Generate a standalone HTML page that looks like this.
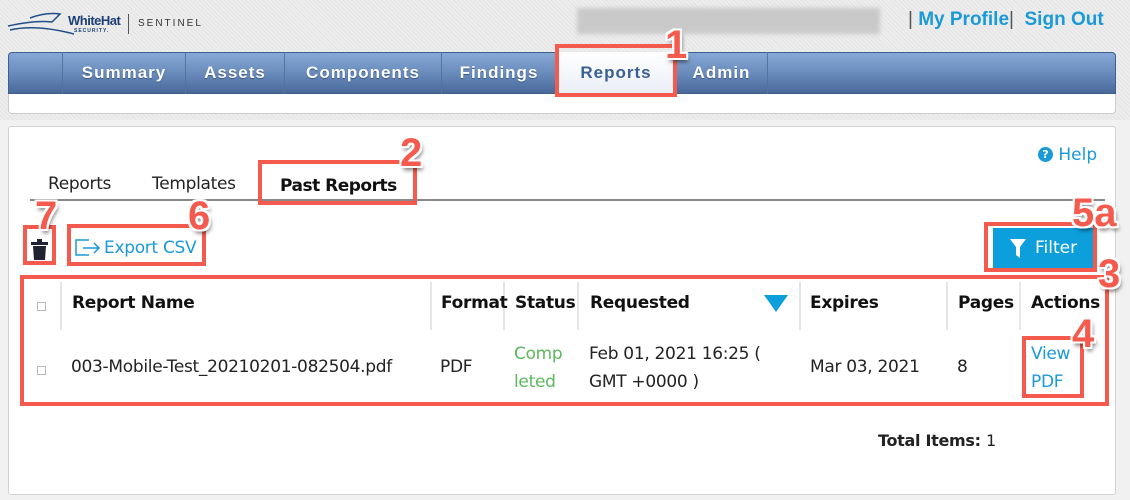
<!DOCTYPE html>
<html><head><meta charset="utf-8"><style>
*{box-sizing:border-box;margin:0;padding:0}
body{width:1130px;height:500px;position:relative;overflow:hidden;background:#f1f1f1;font-family:"Liberation Sans",sans-serif}
.a{position:absolute}
.hdr{left:0;top:0;width:1130px;height:120px;background:repeating-linear-gradient(45deg,#e4e4e4 0 1px,#ededed 1px 3px)}
.nav{left:8px;top:52px;width:1108px;height:42px;background:linear-gradient(#86a8d6,#6a8cbc 50%,#48699a);border:1px solid #3f5f8e;border-radius:4px 4px 0 0}
.tab{position:absolute;top:52px;height:42px;line-height:42px;color:#fff;font-weight:bold;font-size:17px;letter-spacing:1px;text-align:center;border-right:1px solid #55739f;text-shadow:0 1px 1px #3a5680}
.red{position:absolute;border:4px solid #f55a4e}
.num{position:absolute;color:#f55a4e;font-weight:bold;font-size:40px;font-family:"Liberation Sans",sans-serif;line-height:1;text-shadow:2px 0 0 #fff,-2px 0 0 #fff,0 2px 0 #fff,0 -2px 0 #fff,2px 2px 0 #fff,-2px -2px 0 #fff,2px -2px 0 #fff,-2px 2px 0 #fff,2px 4px 4px rgba(0,0,0,.55)}
.th{position:absolute;top:293px;font-weight:bold;font-size:17px;color:#111;font-family:"DejaVu Sans","Liberation Sans",sans-serif;letter-spacing:-.3px}
.td{position:absolute;font-size:17px;color:#222;font-family:"DejaVu Sans","Liberation Sans",sans-serif;letter-spacing:-.3px;line-height:28px}
.sep{position:absolute;top:282px;height:48px;width:2px;background:#e6e6e6}
.cb{position:absolute;width:9px;height:9px;border:1px solid #bbb;background:#fff}
</style></head><body>
<div class="a hdr"></div>
<svg class="a" style="left:6px;top:10px" width="70" height="26"><path d="M2 16 Q30 10 46 12 L54 4 Q40 2 24 8" fill="none" stroke="#1d4f8a" stroke-width="1.5"/><path d="M4 20 Q30 14 68 24" fill="none" stroke="#1d4f8a" stroke-width="1.5"/></svg>
<div class="a" style="left:68px;top:13px;font-weight:bold;font-size:13px;color:#1d3f75;letter-spacing:-.5px">WhiteHat</div>
<div class="a" style="left:74px;top:28px;font-size:5px;font-weight:bold;color:#1d3f75;letter-spacing:1px">SECURITY.</div>
<div class="a" style="left:128px;top:14px;width:1px;height:20px;background:#555"></div>
<div class="a" style="left:138px;top:18px;font-size:10px;letter-spacing:2px;color:#333">SENTINEL</div>
<div class="a" style="left:577px;top:8px;width:303px;height:26px;background:#c9c9c9;filter:blur(2px)"></div>
<div class="a" style="left:908px;top:9px;font-size:19px;font-weight:bold;color:#1a9ad6;white-space:nowrap"><span style="color:#555;font-weight:normal">|</span> My Profile<span style="color:#555;font-weight:normal">|</span>&nbsp; Sign Out</div>
<div class="a nav"></div>
<div class="tab" style="left:62px;width:124px;border-left:1px solid #55739f">Summary</div>
<div class="tab" style="left:186px;width:99px">Assets</div>
<div class="tab" style="left:285px;width:157px">Components</div>
<div class="tab" style="left:442px;width:115px">Findings</div>
<div class="tab" style="left:557px;width:119px;background:linear-gradient(#fff,#e9eef4);color:#3a5f94;text-shadow:none">Reports</div>
<div class="tab" style="left:676px;width:92px">Admin</div>
<div class="a" style="left:8px;top:94px;width:1108px;height:20px;background:#fff;border:1px solid #ccc;border-top:none;border-radius:0 0 4px 4px"></div>
<div class="a" style="left:8px;top:126px;width:1108px;height:369px;background:#fff;border:1px solid #d2d2d2;border-radius:3px"></div>
<div class="a" style="left:1038px;top:145px;font-size:17px;color:#1a9ad6;font-family:'DejaVu Sans',sans-serif"><span style="display:inline-block;width:15px;height:15px;border-radius:50%;background:#1a9ad6;color:#fff;font-size:11px;text-align:center;line-height:15px;font-weight:bold;vertical-align:2px">?</span> Help</div>
<div class="a" style="left:48px;top:174px;font-size:17px;color:#222;font-family:'DejaVu Sans',sans-serif;letter-spacing:-.3px">Reports</div>
<div class="a" style="left:152px;top:174px;font-size:17px;color:#222;font-family:'DejaVu Sans',sans-serif;letter-spacing:-.3px">Templates</div>
<div class="a" style="left:280px;top:176px;font-size:17px;font-weight:bold;color:#111;font-family:'DejaVu Sans',sans-serif;letter-spacing:-.5px">Past Reports</div>
<div class="a" style="left:30px;top:199px;width:1075px;height:2px;background:#888"></div>
<div class="red" style="left:258px;top:160px;width:159px;height:45px"></div>
<svg class="a" style="left:31px;top:239px" width="17" height="22"><rect x="0" y="3" width="17" height="3" fill="#1f2430"/><rect x="6" y="0" width="5" height="4" fill="#1f2430"/><path d="M2 7 H15 L14 21 H3 Z" fill="#1f2430"/></svg>
<div class="red" style="left:23px;top:225px;width:33px;height:40px"></div>
<svg class="a" style="left:75px;top:238px" width="26" height="20"><path d="M14 2 H1 V17 H14" fill="none" stroke="#1a9ad6" stroke-width="1.5"/><path d="M8 10 H24 M19 5 L24 10 L19 15" fill="none" stroke="#1a9ad6" stroke-width="1.5"/></svg>
<div class="a" style="left:104px;top:238px;font-size:17px;color:#1a9ad6;font-family:'DejaVu Sans',sans-serif;letter-spacing:-.3px">Export CSV</div>
<div class="red" style="left:67px;top:224px;width:139px;height:42px"></div>
<div class="a" style="left:993px;top:228px;width:100px;height:40px;background:#0d9fdb;color:#fff;font-size:17px;font-family:'DejaVu Sans',sans-serif;line-height:40px;padding-left:42px">Filter</div>
<svg class="a" style="left:1010px;top:239px" width="16" height="19"><path d="M0 0 H16 L10 8 V19 L6 16 V8 Z" fill="#fff"/></svg>
<div class="red" style="left:984px;top:222px;width:113px;height:50px"></div>
<div class="sep" style="left:60px"></div><div class="sep" style="left:430px"></div><div class="sep" style="left:503px"></div><div class="sep" style="left:577px"></div><div class="sep" style="left:799px"></div><div class="sep" style="left:946px"></div><div class="sep" style="left:1019px"></div>
<div class="cb" style="left:37px;top:302px"></div><div class="cb" style="left:37px;top:366px"></div>
<div class="th" style="left:72px">Report Name</div>
<div class="th" style="left:441px">Format</div>
<div class="th" style="left:515px">Status</div>
<div class="th" style="left:590px">Requested</div>
<svg class="a" style="left:764px;top:295px" width="24" height="18"><path d="M0 0 H24 L12 17 Z" fill="#0d9fdb"/></svg>
<div class="th" style="left:810px">Expires</div>
<div class="th" style="left:958px">Pages</div>
<div class="th" style="left:1031px">Actions</div>
<div class="td" style="left:71px;top:353px">003-Mobile-Test_20210201-082504.pdf</div>
<div class="td" style="left:440px;top:353px">PDF</div>
<div class="td" style="left:514px;top:340px;color:#5cb85c">Comp<br>leted</div>
<div class="td" style="left:589px;top:340px">Feb 01, 2021 16:25 (<br>GMT +0000 )</div>
<div class="td" style="left:810px;top:353px">Mar 03, 2021</div>
<div class="td" style="left:957px;top:353px">8</div>
<div class="td" style="left:1031px;top:340px;color:#1a9ad6">View<br>PDF</div>
<div class="red" style="left:1022px;top:336px;width:62px;height:62px"></div>
<div class="red" style="left:20px;top:275px;width:1089px;height:131px"></div>
<div class="a" style="left:878px;top:431px;font-size:16px;font-weight:bold;color:#222;font-family:'DejaVu Sans',sans-serif;letter-spacing:-.3px">Total Items: <span style="font-weight:normal">1</span></div>
<div class="red" style="left:555px;top:44px;width:122px;height:53px"></div>
<div class="num" style="left:665px;top:25px">1</div>
<div class="num" style="left:400px;top:133px">2</div>
<div class="num" style="left:35px;top:196px">7</div>
<div class="num" style="left:188px;top:196px">6</div>
<div class="num" style="left:1072px;top:193px">5a</div>
<div class="num" style="left:1098px;top:254px">3</div>
<div class="num" style="left:1072px;top:314px">4</div>
</body></html>
